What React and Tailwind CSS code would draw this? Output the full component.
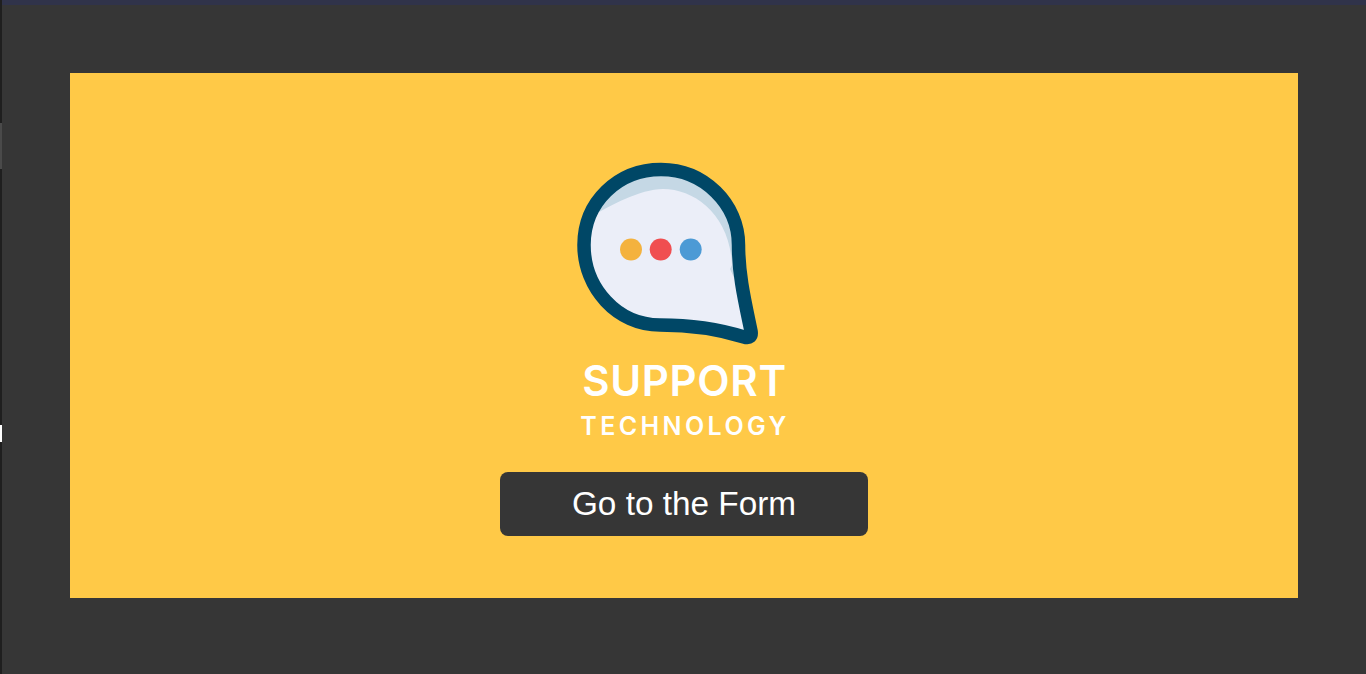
export default function App() {
  return (
    <div className="flex h-[674px] w-full overflow-hidden bg-[#363636]">
      {/* editor gutter on the left edge */}
      <div className="flex h-full w-[2px] shrink-0 flex-col bg-[#1f1f1f]">
        <div className="mt-[123px] h-[46px] bg-[#4a4a4a]" />
        <div className="mt-[256px] h-[17px] bg-white" />
      </div>

      <div className="flex flex-1 flex-col">
        <div className="h-[5px] shrink-0 bg-[#30334a]" />

        <div className="pl-[68px] pr-[68px] pt-[68px]">
          <div className="flex h-[525px] flex-col items-center bg-[#ffc947] pt-[77px] font-['Liberation_Sans',sans-serif]">
            <svg width="248" height="210" viewBox="0 0 248 210" className="block shrink-0">
              <path
                d="M24 95 C24 52 58 19.5 101 19.5 C144 19.5 178.5 54 178.5 95 C178.5 125 185 152 191 181 Q192.5 189.5 184 187 C160 179.5 135 175 100 175 C57 175 24 138 24 95 Z"
                fill="#c5d8e5"
              />
              <path
                d="M32 66 C50 56 80 39 103 39 C135 39 170 65 172 115 L170 119 L175 130 L188 183 C160 178 135 175 100 175 C57 175 24 138 24 95 Z"
                fill="#ebeef8"
              />
              <path
                d="M24 95 C24 52 58 19.5 101 19.5 C144 19.5 178.5 54 178.5 95 C178.5 125 185 152 191 181 Q192.5 189.5 184 187 C160 179.5 135 175 100 175 C57 175 24 138 24 95 Z"
                fill="none"
                stroke="#004766"
                strokeWidth="13.5"
                strokeLinejoin="round"
              />
              <circle cx="71" cy="99.5" r="11" fill="#f4b23e" />
              <circle cx="100.7" cy="99.5" r="11" fill="#f04e50" />
              <circle cx="130.7" cy="99.5" r="11" fill="#4c9ad5" />
            </svg>

            <div className="-mt-[1px] ml-[1px] h-[44px] font-['Inter',sans-serif] text-[42px] font-semibold leading-[44px] tracking-[0.7px] text-white">
              SUPPORT
            </div>
            <div className="ml-[2px] mt-[9px] h-[28px] font-['Inter',sans-serif] text-[25px] font-semibold leading-[28px] tracking-[3.4px] text-white">
              TECHNOLOGY
            </div>

            <button className="mt-[32px] flex h-[64px] w-[368px] items-center justify-center rounded-[8px] bg-[#363636] text-[33.33px] text-white">
              Go to the Form
            </button>
          </div>
        </div>
      </div>
    </div>
  );
}
